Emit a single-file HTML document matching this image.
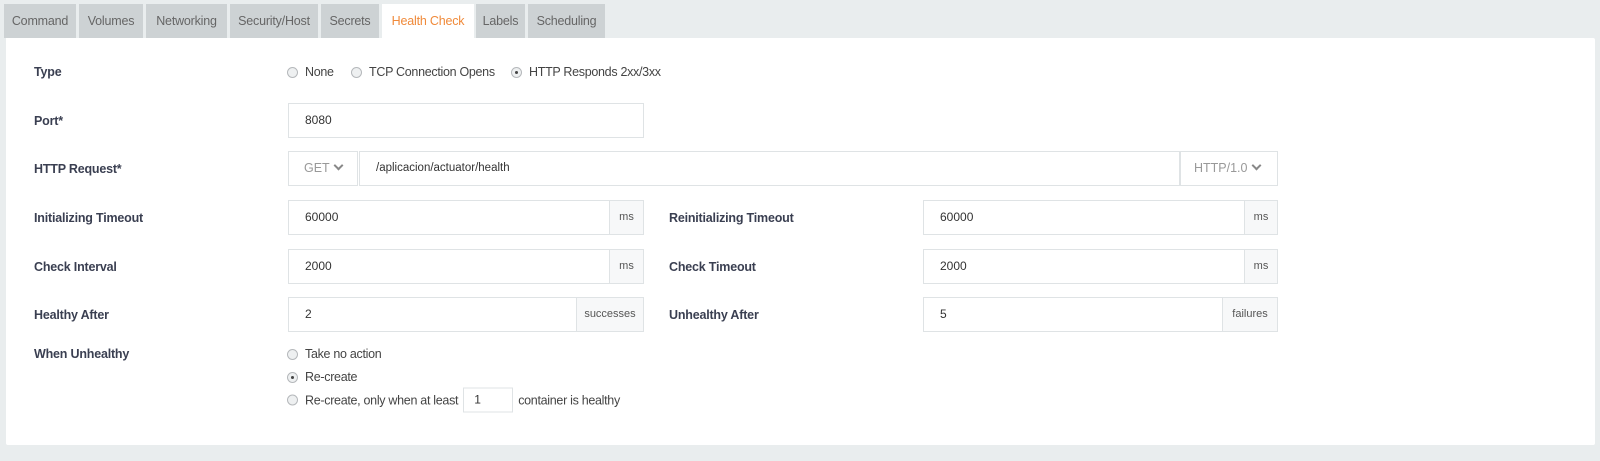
<!DOCTYPE html>
<html><head><meta charset="utf-8"><style>
*{box-sizing:border-box;margin:0;padding:0}
body{width:1600px;height:461px;background:#e9edee;font-family:"Liberation Sans",sans-serif;position:relative;overflow:hidden;color:#3a3f51}
.tab{position:absolute;top:4px;height:34px;background:#cdd2d4;color:#666;font-size:12.5px;line-height:34px;text-align:center;letter-spacing:-0.2px}
.tab.act{background:#fff;color:#f08a3a}
.panel{position:absolute;left:6px;top:38px;width:1589px;height:407px;background:#fff;border-radius:0 2px 2px 2px}
.lbl{position:absolute;font-size:12.5px;font-weight:bold;color:#3a3f51;transform:translateY(-50%);letter-spacing:-0.2px}
.inp{position:absolute;height:35px;border:1px solid #dfe3e5;background:#fff;font-size:12px;color:#333;line-height:33px;padding-left:16px}
.add{position:absolute;height:35px;border:1px solid #dfe3e5;background:#f7f8f9;font-size:11px;color:#555;line-height:33px;text-align:center}
.r{position:absolute;font-size:12.5px;color:#444;transform:translateY(-50%);white-space:nowrap;letter-spacing:-0.3px;display:flex;align-items:center}
.rad{display:inline-block;width:11px;height:11px;border-radius:50%;border:1px solid #b5b8bb;background:#eef0f1;margin-right:7px;position:relative}
.rad.on::after{content:"";position:absolute;left:3px;top:3px;width:3px;height:3px;border-radius:50%;background:#444}
.chev{display:inline-block;width:7px;height:7px;border-right:2px solid #888;border-bottom:2px solid #888;transform:rotate(45deg);margin-left:5px;vertical-align:3px}
.sm{display:inline-block;width:50px;height:25px;border:1px solid #dfe3e5;line-height:23px;padding-left:10px;font-size:12px;color:#333;margin:0 5px}
</style></head><body>
<div class="tab" style="left:4px;width:72px">Command</div>
<div class="tab" style="left:79px;width:64px">Volumes</div>
<div class="tab" style="left:146px;width:81px">Networking</div>
<div class="tab" style="left:230px;width:88px">Security/Host</div>
<div class="tab" style="left:321px;width:58px">Secrets</div>
<div class="tab act" style="left:382px;width:92px">Health Check</div>
<div class="tab" style="left:476px;width:49px">Labels</div>
<div class="tab" style="left:528px;width:77px">Scheduling</div>
<div class="panel"></div>

<div class="lbl" style="left:34px;top:72px">Type</div>
<div class="r" style="left:287px;top:72px"><span class="rad"></span>None</div>
<div class="r" style="left:351px;top:72px"><span class="rad"></span>TCP Connection Opens</div>
<div class="r" style="left:511px;top:72px"><span class="rad on"></span>HTTP Responds 2xx/3xx</div>

<div class="lbl" style="left:34px;top:121px">Port*</div>
<div class="inp" style="left:288px;top:103px;width:356px">8080</div>

<div class="lbl" style="left:34px;top:169px">HTTP Request*</div>
<div class="inp" style="left:288px;top:151px;width:70px;color:#999;font-size:12.5px;padding-left:15px">GET<span class="chev"></span></div>
<div class="inp" style="left:359px;top:151px;width:821px;font-size:11.5px">/aplicacion/actuator/health</div>
<div class="inp" style="left:1180px;top:151px;width:98px;color:#999;font-size:12.5px;padding-left:13px">HTTP/1.0<span class="chev"></span></div>

<div class="lbl" style="left:34px;top:218px">Initializing Timeout</div>
<div class="inp" style="left:288px;top:200px;width:322px">60000</div>
<div class="add" style="left:609px;top:200px;width:35px">ms</div>
<div class="lbl" style="left:669px;top:218px">Reinitializing Timeout</div>
<div class="inp" style="left:923px;top:200px;width:322px">60000</div>
<div class="add" style="left:1244px;top:200px;width:34px">ms</div>

<div class="lbl" style="left:34px;top:267px">Check Interval</div>
<div class="inp" style="left:288px;top:249px;width:322px">2000</div>
<div class="add" style="left:609px;top:249px;width:35px">ms</div>
<div class="lbl" style="left:669px;top:267px">Check Timeout</div>
<div class="inp" style="left:923px;top:249px;width:322px">2000</div>
<div class="add" style="left:1244px;top:249px;width:34px">ms</div>

<div class="lbl" style="left:34px;top:315px">Healthy After</div>
<div class="inp" style="left:288px;top:297px;width:289px">2</div>
<div class="add" style="left:576px;top:297px;width:68px">successes</div>
<div class="lbl" style="left:669px;top:315px">Unhealthy After</div>
<div class="inp" style="left:923px;top:297px;width:300px">5</div>
<div class="add" style="left:1222px;top:297px;width:56px">failures</div>

<div class="lbl" style="left:34px;top:354px">When Unhealthy</div>
<div class="r" style="left:287px;top:354px"><span class="rad"></span>Take no action</div>
<div class="r" style="left:287px;top:377px"><span class="rad on"></span>Re-create</div>
<div class="r" style="left:287px;top:400px"><span class="rad"></span>Re-create, only when at least<span class="sm">1</span>container is healthy</div>
</body></html>
